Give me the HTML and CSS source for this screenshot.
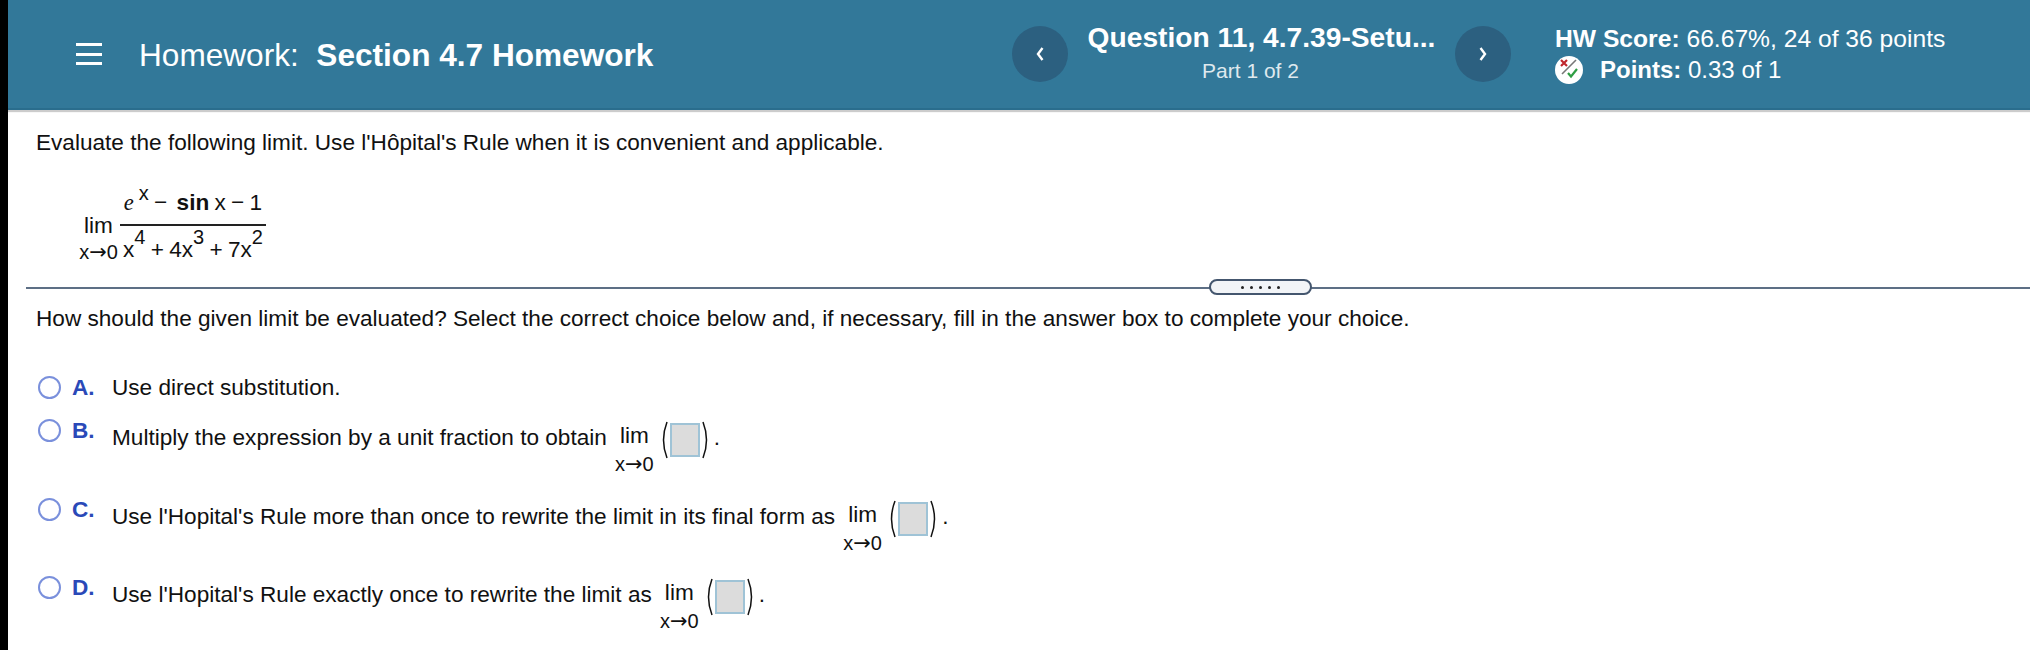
FILE: index.html
```html
<!DOCTYPE html>
<html lang="en">
<head>
    <meta charset="UTF-8">
    <title>Homework: Section 4.7 Homework</title>
    <link rel="stylesheet" href="styles.css">
</head>
<body>
    <header class="topbar">
        <div class="menu-icon"><span></span><span></span><span></span></div>
        <div class="hw-title">Homework:&nbsp; <b>Section 4.7 Homework</b></div>
        <button class="nav-btn">
            <svg width="10" height="16" viewBox="0 0 10 16"><path d="M7.5 2 L3 8 L7.5 14" fill="none" stroke="#fff" stroke-width="2.4"/></svg>
        </button>
        <div class="question-info">
            <div class="question-name">Question 11, 4.7.39-Setu...</div>
            <div class="question-part">Part 1 of 2</div>
        </div>
        <button class="nav-btn">
            <svg width="10" height="16" viewBox="0 0 10 16"><path d="M2.5 2 L7 8 L2.5 14" fill="none" stroke="#fff" stroke-width="2.4"/></svg>
        </button>
        <div class="score">
            <div class="hw-score"><b>HW Score:</b> 66.67%, 24 of 36 points</div>
            <div class="points">
                <svg class="score-icon" width="28" height="28" viewBox="0 0 28 28">
                    <circle cx="14" cy="14" r="14" fill="#fff"/>
                    <path d="M6 4 L12 10 M12 4 L6 10" stroke="#c0272d" stroke-width="2.2"/>
                    <path d="M7 18 L21 4" stroke="#777" stroke-width="1.6"/>
                    <path d="M13 17 L16 20.5 L22 13" fill="none" stroke="#2f9e44" stroke-width="2.2"/>
                </svg>
                <span><b>Points:</b> 0.33 of 1</span>
            </div>
        </div>
    </header>

    <main class="content">
        <p class="prompt">Evaluate the following limit. Use l'Hôpital's Rule when it is convenient and applicable.</p>

        <div class="given">
            <div class="lim">
                <span>lim</span>
                <span class="lim-sub">x<span class="arrow">→</span>0</span>
            </div>
            <div class="fraction">
                <div class="numerator"><i class="e">e</i><sup>x</sup> − <b>sin</b> x − 1</div>
                <div class="denominator">x<sup>4</sup> + 4x<sup>3</sup> + 7x<sup>2</sup></div>
            </div>
        </div>

        <div class="divider">
            <div class="divider-pill"><i></i><i></i><i></i><i></i><i></i></div>
        </div>

        <p class="prompt prompt-second">How should the given limit be evaluated? Select the correct choice below and, if necessary, fill in the answer box to complete your choice.</p>

        <div class="option option-a">
            <span class="radio"></span>
            <span class="letter">A.</span>
            <span class="option-text">Use direct substitution.</span>
        </div>
        <div class="option">
            <span class="radio"></span>
            <span class="letter">B.</span>
            <span class="option-text">Multiply the expression by a unit fraction to obtain</span>
            <div class="lim"><span>lim</span><span class="lim-sub">x<span class="arrow">→</span>0</span></div>
            <div class="answer">
                <svg width="8" height="38" viewBox="0 0 8 38"><path d="M7 1 Q0 19 7 37" fill="none" stroke="#111" stroke-width="1.5"/></svg>
                <span class="answer-box"></span>
                <svg width="8" height="38" viewBox="0 0 8 38"><path d="M1 1 Q8 19 1 37" fill="none" stroke="#111" stroke-width="1.5"/></svg>
            </div>
            <span class="period">.</span>
        </div>
        <div class="option">
            <span class="radio"></span>
            <span class="letter">C.</span>
            <span class="option-text">Use l'Hopital's Rule more than once to rewrite the limit in its final form as</span>
            <div class="lim"><span>lim</span><span class="lim-sub">x<span class="arrow">→</span>0</span></div>
            <div class="answer">
                <svg width="8" height="38" viewBox="0 0 8 38"><path d="M7 1 Q0 19 7 37" fill="none" stroke="#111" stroke-width="1.5"/></svg>
                <span class="answer-box"></span>
                <svg width="8" height="38" viewBox="0 0 8 38"><path d="M1 1 Q8 19 1 37" fill="none" stroke="#111" stroke-width="1.5"/></svg>
            </div>
            <span class="period">.</span>
        </div>
        <div class="option">
            <span class="radio"></span>
            <span class="letter">D.</span>
            <span class="option-text">Use l'Hopital's Rule exactly once to rewrite the limit as</span>
            <div class="lim"><span>lim</span><span class="lim-sub">x<span class="arrow">→</span>0</span></div>
            <div class="answer">
                <svg width="8" height="38" viewBox="0 0 8 38"><path d="M7 1 Q0 19 7 37" fill="none" stroke="#111" stroke-width="1.5"/></svg>
                <span class="answer-box"></span>
                <svg width="8" height="38" viewBox="0 0 8 38"><path d="M1 1 Q8 19 1 37" fill="none" stroke="#111" stroke-width="1.5"/></svg>
            </div>
            <span class="period">.</span>
        </div>
    </main>
</body>
</html>
```
FILE: styles.css
```css
html, body {
    margin: 0;
    height: 650px;
    overflow: hidden;
}
body {
    font-family: "Liberation Sans", Arial, sans-serif;
    font-size: 22.6px;
    color: #111;
    background: #fff;
    border-left: 8px solid #000;
}
.topbar {
    display: flex;
    align-items: center;
    height: 108px;
    padding-left: 68px;
    background: #327899;
    border-bottom: 2px solid #2a6d8d;
    box-shadow: 0 2px 1px #ccc;
    color: #fff;
}
.menu-icon {
    display: flex;
    flex-direction: column;
    justify-content: space-between;
    width: 26px;
    height: 22px;
}
.menu-icon span {
    height: 3px;
    background: #fff;
}
.hw-title {
    width: 873px;
    margin: 3px 0 0 37px;
    font-size: 31.6px;
}
.nav-btn {
    display: flex;
    align-items: center;
    justify-content: center;
    width: 56px;
    height: 56px;
    padding: 0;
    border: none;
    border-radius: 50%;
    background: #2c6080;
}
.question-info {
    width: 387px;
    margin-bottom: 4px;
    text-align: center;
}
.question-name {
    font-size: 28.2px;
    font-weight: bold;
}
.question-part {
    margin: 5px 22px 0 0;
    font-size: 21px;
    color: #dfe9ee;
}
.score {
    margin-left: 44px;
    font-size: 24px;
}
.hw-score {
    font-size: 24.65px;
}
.points {
    display: flex;
    align-items: center;
    gap: 17px;
    margin-top: 3px;
}
.score-icon {
    flex: none;
}
.content {
    padding: 20px 0 0 28px;
}
.prompt {
    margin: 0;
}
.given {
    display: flex;
    align-items: flex-start;
    margin: 33px 0 0 42px;
}
.lim {
    display: flex;
    flex-direction: column;
    align-items: center;
    width: 41px;
    line-height: 28px;
}
.given .lim {
    margin-top: 23px;
}
.lim-sub {
    margin-top: -2px;
    font-size: 20px;
}
.arrow {
    font-family: "DejaVu Sans", sans-serif;
    font-size: 21px;
    line-height: 1;
}
.fraction {
    margin-left: 1px;
    line-height: 28px;
    text-align: center;
}
.numerator {
    padding: 0 3px 7px;
    border-bottom: 2px solid #222;
    word-spacing: -1px;
}
.numerator b {
    margin-left: 4px;
}
.denominator {
    margin-top: 10px;
    padding: 0 3px;
    word-spacing: -1px;
}
.fraction sup {
    font-size: 20px;
    line-height: 0;
    vertical-align: 13px;
}
.numerator sup {
    margin-left: 5px;
    vertical-align: 10px;
}
.numerator .e {
    font-family: "Liberation Serif", serif;
}
.divider {
    position: relative;
    height: 2px;
    margin: 21px 0 0 -10px;
    background: #5d6f85;
}
.divider-pill {
    position: absolute;
    left: 1183px;
    top: -8px;
    display: flex;
    align-items: center;
    justify-content: center;
    gap: 6px;
    width: 99px;
    height: 12px;
    border: 2px solid #44566e;
    border-radius: 8px;
    background: #f2f4f7;
}
.divider-pill i {
    width: 3px;
    height: 3px;
    border-radius: 50%;
    background: #222;
}
.prompt-second {
    margin-top: 17px;
}
.option {
    display: flex;
    align-items: flex-start;
    height: 78.5px;
    padding-left: 2px;
}
.option-a {
    height: 43px;
    margin-top: 44px;
}
.radio {
    flex: none;
    box-sizing: border-box;
    width: 23px;
    height: 23px;
    border: 2.5px solid #7a90dc;
    border-radius: 50%;
}
.letter {
    width: 40px;
    margin: -1px 0 0 11px;
    font-weight: bold;
    color: #2a49b8;
}
.option-text {
    margin-top: 6px;
}
.option-a .option-text {
    margin-top: -1px;
}
.option .lim {
    margin: 3px 0 0 7px;
}
.option .lim-sub {
    margin-top: 0;
}
.answer {
    display: flex;
    align-items: center;
    margin: 2px 0 0 5px;
}
.answer-box {
    width: 30px;
    height: 34px;
    margin: 0 2px;
    box-sizing: border-box;
    border: 2px solid #9fc3d6;
    background: #dcdcdc;
}
.period {
    margin: 6px 0 0 4px;
}
```
